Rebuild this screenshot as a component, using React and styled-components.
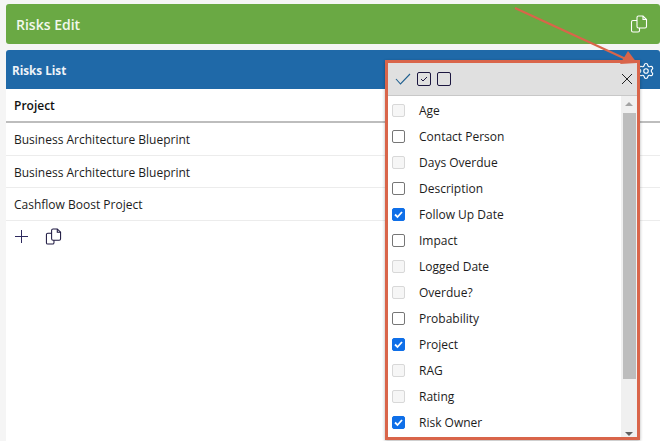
import React from "react";
import styled, { createGlobalStyle } from "styled-components";
import { Settings } from "lucide-react";

const GlobalStyle = createGlobalStyle`
  html, body {
    margin: 0;
    padding: 0;
    background: #f5f5f5;
    font-family: "Open Sans", "Noto Sans", sans-serif;
    overflow: hidden;
  }
`;

const Page = styled.div`
  position: relative;
  width: 660px;
  height: 441px;
  padding: 4px 0 0 6px;
  box-sizing: border-box;
  overflow: hidden;
`;

const EditBar = styled.div`
  height: 40px;
  background: #6aa944;
  border-radius: 3px;
  display: flex;
  align-items: center;
  justify-content: space-between;
  padding: 0 12px 0 10px;
  color: #f2f8ec;
  font-size: 14px;
  font-weight: 600;
`;

const ListBar = styled.div`
  margin-top: 6px;
  height: 39px;
  box-sizing: border-box;
  background: #1f69a8;
  border-radius: 3px 3px 0 0;
  display: flex;
  align-items: center;
  justify-content: space-between;
  padding: 0 5px 0 6px;
  color: #eef3f8;
  font-size: 11.7px;
  font-weight: 700;

  svg {
    margin-top: 3px;
  }
`;

const Table = styled.div`
  background: #fff;
  height: 352px;
`;

const HeadRow = styled.div`
  height: 32px;
  border-bottom: 2px solid #bdbdbd;
  display: flex;
  align-items: center;
  padding-left: 8px;
  font-size: 12px;
  font-weight: 600;
  color: #111;
`;

const Row = styled.div`
  height: 32.5px;
  box-sizing: border-box;
  border-bottom: 1px solid #ececec;
  display: flex;
  align-items: center;
  padding: 1.5px 0 0 8px;
  font-size: 12px;
  color: #1c1c1c;
`;

const Actions = styled.div`
  display: flex;
  align-items: center;
  gap: 17px;
  padding: 7px 0 0 9px;
`;

const Popup = styled.div`
  position: absolute;
  left: 385px;
  top: 60px;
  width: 255px;
  height: 380px;
  box-sizing: border-box;
  border: 3px solid #d9654a;
  background: #fff;
  box-shadow: 0 1px 3px rgba(0, 0, 0, 0.3);
  display: flex;
  flex-direction: column;
`;

const PopupHead = styled.div`
  height: 32px;
  flex: none;
  background: #e0e0e0;
  border-bottom: 1px solid #c8c8c8;
  display: flex;
  align-items: center;
  padding: 0 4px 0 7px;
  gap: 6px;
`;

const Spacer = styled.div`
  flex: 1;
`;

const PopupBody = styled.div`
  flex: 1;
  display: flex;
  min-height: 0;
`;

const List = styled.div`
  flex: 1;
  padding-top: 1px;
  overflow: hidden;
`;

const Item = styled.div`
  height: 26px;
  display: flex;
  align-items: center;
  padding-left: 4px;
  gap: 14px;
  font-size: 12px;
  color: #1c1c1c;
`;

const Box = styled.span`
  width: 13px;
  height: 13px;
  box-sizing: border-box;
  border-radius: 2px;
  display: flex;
  align-items: center;
  justify-content: center;
  background: ${(p) => (p.$checked ? "#0f6fe8" : p.$disabled ? "#f6f6f6" : "#fff")};
  border: 1px solid
    ${(p) => (p.$checked ? "#0f6fe8" : p.$disabled ? "#d8d8d8" : "#767676")};
`;

const Scrollbar = styled.div`
  width: 16px;
  flex: none;
  background: #f0f0f0;
  display: flex;
  flex-direction: column;
  align-items: center;
  justify-content: space-between;
  position: relative;
`;

const Thumb = styled.div`
  position: absolute;
  top: 17px;
  left: 2px;
  width: 13px;
  height: 266px;
  background: #bdbdbd;
`;

const ArrowUp = styled.span`
  margin-top: 6px;
  border: 4px solid transparent;
  border-top: 0;
  border-bottom: 4px solid #a3a3a3;
`;

const ArrowDown = styled.span`
  margin-bottom: 1px;
  border: 4px solid transparent;
  border-bottom: 0;
  border-top: 4px solid #606060;
`;

const Pointer = styled.svg`
  position: absolute;
  left: 0;
  top: 0;
  pointer-events: none;
`;

const CopyIcon = ({ color, size = 18 }) => (
  <svg width={size} height={size} viewBox="0 0 18 18" fill="none" stroke={color} strokeWidth="1.1">
    <path d="M7 5.500H3a1.500 1.500 0 0 0-1.500 1.500v8.500A1.500 1.500 0 0 0 3 17h5a1.500 1.500 0 0 0 1.500-1.500V13" />
    <path d="M7 2.500A1.500 1.500 0 0 1 8.500 1H13l3.500 3.500V11.500A1.500 1.500 0 0 1 15 13H8.500A1.500 1.500 0 0 1 7 11.500Z" />
    <path d="M13 1v3.500h3.500" />
  </svg>
);

const columns = [
  { name: "Age", disabled: true },
  { name: "Contact Person" },
  { name: "Days Overdue", disabled: true },
  { name: "Description" },
  { name: "Follow Up Date", checked: true },
  { name: "Impact" },
  { name: "Logged Date", disabled: true },
  { name: "Overdue?", disabled: true },
  { name: "Probability" },
  { name: "Project", checked: true },
  { name: "RAG", disabled: true },
  { name: "Rating", disabled: true },
  { name: "Risk Owner", checked: true },
];

const projects = [
  "Business Architecture Blueprint",
  "Business Architecture Blueprint",
  "Cashflow Boost Project",
];

export default function App() {
  return (
    <Page>
      <GlobalStyle />
      <EditBar>
        Risks Edit
        <CopyIcon color="#fff" />
      </EditBar>
      <ListBar>
        Risks List
        <Settings size={18} color="#fff" strokeWidth={1.5} />
      </ListBar>
      <Table>
        <HeadRow>Project</HeadRow>
        {projects.map((name, i) => (
          <Row key={i}>{name}</Row>
        ))}
        <Actions>
          <svg width="13" height="13" viewBox="0 0 13 13" stroke="#2d2a5e" strokeWidth="1">
            <path d="M6.500 0v13M0 6.500h13" />
          </svg>
          <CopyIcon color="#1c1740" size={17} />
        </Actions>
      </Table>

      <Popup>
        <PopupHead>
          <svg width="16" height="12" viewBox="0 0 16 12" fill="none" stroke="#1f5f8f" strokeWidth="1.1">
            <path d="M1 6l4.500 5L15 1" />
          </svg>
          <svg width="14" height="14" viewBox="0 0 14 14" fill="none" stroke="#1c1740" strokeWidth="1">
            <rect x="0.500" y="0.500" width="13" height="13" rx="1.500" />
            <path d="M4 7l2 2 4-4" />
          </svg>
          <svg width="14" height="14" viewBox="0 0 14 14" fill="none" stroke="#1c1740" strokeWidth="1">
            <rect x="0.500" y="0.500" width="13" height="13" rx="1.500" />
          </svg>
          <Spacer />
          <svg width="12" height="12" viewBox="0 0 12 12" stroke="#222" strokeWidth="1">
            <path d="M1 1l10 10M11 1L1 11" />
          </svg>
        </PopupHead>
        <PopupBody>
          <List>
            {columns.map((c) => (
              <Item key={c.name}>
                <Box $checked={c.checked} $disabled={c.disabled}>
                  {c.checked && (
                    <svg width="9" height="9" viewBox="0 0 9 9" fill="none" stroke="#fff" strokeWidth="1.800">
                      <path d="M1 4.500l2.500 2.500L8 2" />
                    </svg>
                  )}
                </Box>
                {c.name}
              </Item>
            ))}
          </List>
          <Scrollbar>
            <ArrowUp />
            <Thumb />
            <ArrowDown />
          </Scrollbar>
        </PopupBody>
      </Popup>

      <Pointer width="660" height="441" viewBox="0 0 660 441">
        <path d="M515 8L628 60" stroke="#d9654a" strokeWidth="2" />
        <path d="M637 63L620 64L628 51Z" fill="#d9654a" />
      </Pointer>
    </Page>
  );
}
